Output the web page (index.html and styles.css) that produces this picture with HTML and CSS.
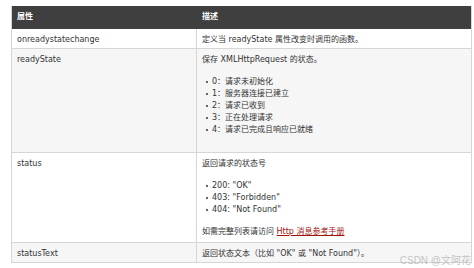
FILE: index.html
```html
<!DOCTYPE html>
<html lang="zh">
<head>
<meta charset="utf-8">
<link rel="stylesheet" href="styles.css">
</head>
<body>
<div class="page">
  <table class="ref">
    <colgroup><col class="c1"><col class="c2"></colgroup>
    <thead>
      <tr><th>属性</th><th>描述</th></tr>
    </thead>
    <tbody>
      <tr>
        <td>onreadystatechange</td>
        <td>定义当 readyState 属性改变时调用的函数。</td>
      </tr>
      <tr class="alt">
        <td>readyState</td>
        <td>
          <p class="para">保存 XMLHttpRequest 的状态。</p>
          <ul class="list last">
            <li>0：请求未初始化</li>
            <li>1：服务器连接已建立</li>
            <li>2：请求已收到</li>
            <li>3：正在处理请求</li>
            <li>4：请求已完成且响应已就绪</li>
          </ul>
        </td>
      </tr>
      <tr>
        <td>status</td>
        <td>
          <p class="para">返回请求的状态号</p>
          <ul class="list">
            <li>200: "OK"</li>
            <li>403: "Forbidden"</li>
            <li>404: "Not Found"</li>
          </ul>
          <p class="para note">如需完整列表请访问 <a class="link" href="#">Http 消息参考手册</a></p>
        </td>
      </tr>
      <tr class="alt">
        <td>statusText</td>
        <td>返回状态文本（比如 "OK" 或 "Not Found"）。</td>
      </tr>
    </tbody>
  </table>
  <div class="watermark">CSDN @文阿花</div>
</div>
</body>
</html>
```
FILE: styles.css
```css
html, body {
  margin: 0;
  padding: 0;
  background: #ffffff;
}
body {
  font-family: "DejaVu Sans", "Noto Sans CJK SC", sans-serif;
  font-size: 8px;
  line-height: 12px;
  color: #333333;
}
.page {
  position: relative;
  width: 474px;
  height: 268px;
  padding: 6px 0 0 11px;
  box-sizing: border-box;
  overflow: hidden;
}
.ref {
  width: 461px;
  table-layout: fixed;
  border-collapse: separate;
  border-spacing: 0;
  border-left: 1px solid #d6d6d6;
  border-right: 1px solid #d6d6d6;
}
.c1 { width: 185px; }
.ref th {
  background: #3f3f3f;
  color: #ffffff;
  font-weight: bold;
  text-align: left;
  padding: 5px 5px 6px;
  border-right: 1px solid #3f3f3f;
}
.ref th:last-child, .ref td:last-child { border-right: none; }
.ref td {
  vertical-align: top;
  padding: 5px 5px 2px;
  border-right: 1px solid #d6d6d6;
  border-bottom: 1px solid #d6d6d6;
}
.ref tr.alt td { background: #f6f6f6; }
.para { margin: 0; }
.note { margin-bottom: 2px; }
.list {
  margin: 10px 0;
  padding-left: 9px;
  list-style: none;
}
.list li {
  display: flex;
  align-items: center;
  margin-left: -6px;
}
.list li::before {
  content: "";
  flex: none;
  width: 2px;
  height: 2px;
  border-radius: 50%;
  background: #333333;
  margin: 0 4px 0 1px;
}
.list.last { margin-bottom: 14px; }
.link {
  color: #a2150f;
  text-decoration: underline;
}
.watermark {
  position: absolute;
  right: 3px;
  bottom: 1px;
  font-family: "Liberation Sans", "Noto Sans CJK SC", sans-serif;
  font-size: 10px;
  line-height: 12px;
  color: rgba(160, 160, 160, 0.6);
}
```
